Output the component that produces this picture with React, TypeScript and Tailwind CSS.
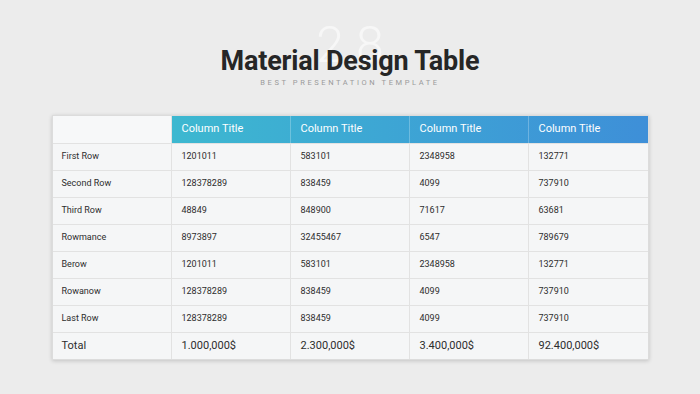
import React from 'react';

const rows: [string, string, string, string, string][] = [
  ['First Row', '1201011', '583101', '2348958', '132771'],
  ['Second Row', '128378289', '838459', '4099', '737910'],
  ['Third Row', '48849', '848900', '71617', '63681'],
  ['Rowmance', '8973897', '32455467', '6547', '789679'],
  ['Berow', '1201011', '583101', '2348958', '132771'],
  ['Rowanow', '128378289', '838459', '4099', '737910'],
  ['Last Row', '128378289', '838459', '4099', '737910'],
];

const totals = ['Total', '1.000,000$', '2.300,000$', '3.400,000$', '92.400,000$'];

export default function App() {
  return (
    <div
      className="w-[700px] h-[394px] bg-[#ececec] flex flex-col items-center overflow-hidden"
      style={{ fontFamily: 'Roboto, "Liberation Sans", sans-serif' }}
    >
      {/* Title block with faint slide number behind */}
      <div className="relative flex flex-col items-center pt-[44px]">
        <span className="absolute top-[20px] left-1/2 -translate-x-1/2 text-[50px] font-light text-[#f7f7f7] tracking-[12px] pl-[12px] leading-none select-none">
          28
        </span>
        <h1 className="relative text-[27px] font-bold text-[#262626] leading-[34px] tracking-[-0.2px]">
          Material Design Table
        </h1>
        <p className="relative text-[7.5px] text-[#9a9a9a] tracking-[2.6px] leading-[10px]">
          BEST PRESENTATION TEMPLATE
        </p>
      </div>

      {/* Table */}
      <div className="mt-[27px] w-[597px] bg-[#f5f6f7] shadow-[0_1px_4px_rgba(0,0,0,0.18)] border border-[#dcdcdc]">
        <div className="grid grid-cols-5 h-[27px]">
          <div className="bg-[#f7f8f9] border-r border-[#e2e2e2]" />
          <div className="col-span-4 grid grid-cols-4 bg-gradient-to-r from-[#3db8d0] to-[#3e8fd8]">
            {[0, 1, 2, 3].map((i) => (
              <div
                key={i}
                className={`flex items-center pl-[10px] text-[11px] text-white ${i < 3 ? 'border-r border-white/25' : ''}`}
              >
                Column Title
              </div>
            ))}
          </div>
        </div>
        {rows.map((r, ri) => (
          <div key={ri} className="grid grid-cols-5 h-[27px] border-t border-[#e2e2e2]">
            {r.map((c, ci) => (
              <div
                key={ci}
                className={`flex items-center text-[9px] text-[#2d2d2d] ${ci === 0 ? 'pl-[9px]' : 'pl-[10px]'} ${ci < 4 ? 'border-r border-[#e2e2e2]' : ''}`}
              >
                {c}
              </div>
            ))}
          </div>
        ))}
        <div className="grid grid-cols-5 h-[27px] border-t border-[#e2e2e2]">
          {totals.map((c, ci) => (
            <div
              key={ci}
              className={`flex items-center text-[11px] text-[#2d2d2d] ${ci === 0 ? 'pl-[9px]' : 'pl-[10px]'} ${ci < 4 ? 'border-r border-[#e2e2e2]' : ''}`}
            >
              {c}
            </div>
          ))}
        </div>
      </div>
    </div>
  );
}
